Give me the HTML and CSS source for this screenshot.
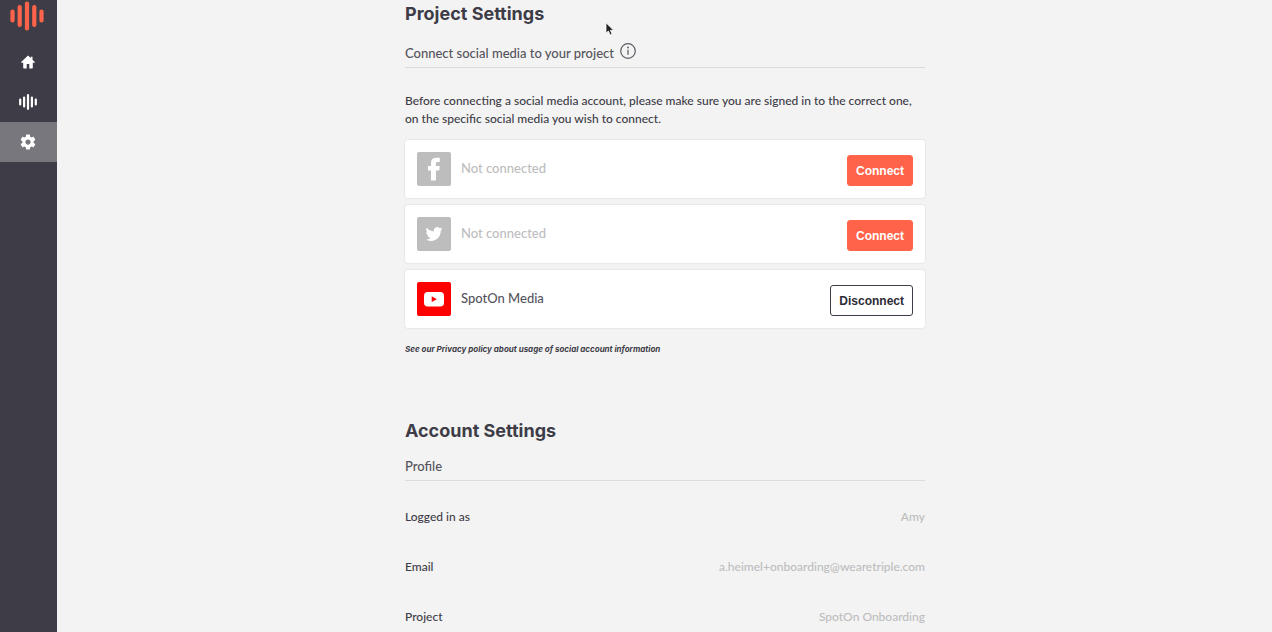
FILE: index.html
```
<!DOCTYPE html>
<html lang="en">
<head>
    <meta charset="utf-8">
    <title>Settings</title>
    <link rel="stylesheet" href="styles.css">
</head>
<body>
<nav class="sidebar">
    <a href="#" class="logo" aria-label="SpotOn">
        <svg width="34" height="30" viewBox="0 0 34 30" stroke="#ff644b" stroke-width="4.2" stroke-linecap="round">
            <path d="M2.5 10.500v9M9.700 6v18M17 2.500v25M24.300 6v18M31.500 10.500v9"/>
        </svg>
    </a>
    <a href="#" class="nav-item" aria-label="Home">
        <svg width="14" height="14" viewBox="0 0 14 14" fill="#fff">
            <path d="M7 .4L.2 7v.7h2v5.1q0 .6.6.6h2.900V9h2.600v4.400h2.900q.6 0 .6-.6V7.700h2V7l-2.300-2.200V1.700H9.800v1.200z"/>
        </svg>
    </a>
    <a href="#" class="nav-item" aria-label="Streams">
        <svg width="18" height="16" viewBox="0 0 18 16" stroke="#fff" stroke-width="2.200" stroke-linecap="round">
            <path d="M1.200 5.500v5M5.100 3.500v9M9 1.200v13.600M12.900 3.500v9M16.800 5.500v5"/>
        </svg>
    </a>
    <a href="#" class="nav-item active" aria-label="Settings">
        <svg width="18" height="18" viewBox="0 0 24 24" fill="#fff">
            <path d="M19.430 12.980c.04-.32.07-.64.07-.98s-.03-.66-.07-.98l2.110-1.650c.19-.15.24-.42.12-.64l-2-3.460c-.12-.22-.39-.3-.61-.22l-2.490 1c-.52-.4-1.080-.73-1.690-.98l-.38-2.650C14.460 2.180 14.250 2 14 2h-4c-.25 0-.46.18-.49.42l-.38 2.650c-.61.25-1.170.59-1.690.98l-2.490-1c-.23-.09-.49 0-.61.22l-2 3.460c-.13.22-.07.49.12.64l2.110 1.650c-.04.32-.07.65-.07.98s.03.66.07.98l-2.110 1.650c-.19.15-.24.42-.12.64l2 3.460c.12.22.39.3.61.22l2.490-1c.52.4 1.080.73 1.690.98l.38 2.650c.03.24.24.42.49.42h4c.25 0 .46-.18.49-.42l.38-2.650c.61-.25 1.170-.59 1.690-.98l2.490 1c.23.09.49 0 .61-.22l2-3.460c.12-.22.07-.49-.12-.64l-2.110-1.650zM12 15.500c-1.930 0-3.500-1.570-3.500-3.500s1.570-3.500 3.500-3.500 3.500 1.570 3.500 3.500-1.570 3.500-3.500 3.500z"/>
        </svg>
    </a>
</nav>
<main class="content">
    <section class="settings">
        <h2>Project Settings</h2>
        <h3>Connect social media to your project
            <svg class="info" width="16" height="16" viewBox="0 0 16 16" fill="none" stroke="#5c5c64">
                <circle cx="8" cy="8" r="7.300" stroke-width="1.200"/>
                <path d="M8 6.700v5" stroke-width="1.300"/>
                <circle cx="8" cy="4.500" r=".9" fill="#5c5c64" stroke="none"/>
            </svg>
        </h3>
        <p class="intro">Before connecting a social media account, please make sure you are signed in to the correct one, on the specific social media you wish to connect.</p>
        <ul class="accounts">
            <li class="account">
                <svg class="icon" viewBox="0 0 34 34">
                    <rect width="34" height="34" rx="2" fill="#bdbdbe"/>
                    <path d="M14 28.500V18.500h-3V14h3v-3c0-3.600 1.800-5.300 5.300-5.300h3.500V10h-2.200c-1.300 0-1.700.5-1.700 1.600V14h3.800l-.5 4.500h-3.300v10z" fill="#fff"/>
                </svg>
                <span class="name">Not connected</span>
                <button type="button" class="btn">Connect</button>
            </li>
            <li class="account">
                <svg class="icon" viewBox="0 0 34 34">
                    <rect width="34" height="34" rx="2" fill="#bdbdbe"/>
                    <path transform="translate(8.500 8.500) scale(.71)" fill="#fff" d="M23.950 4.570a10 10 0 0 1-2.820.77 4.960 4.960 0 0 0 2.160-2.720c-.95.55-2 .95-3.130 1.180a4.920 4.920 0 0 0-8.380 4.480C7.690 8.100 4.070 6.130 1.640 3.160a4.820 4.820 0 0 0-.67 2.480c0 1.710.87 3.210 2.190 4.100a4.900 4.900 0 0 1-2.230-.62v.06a4.920 4.920 0 0 0 3.950 4.830 5 5 0 0 1-2.210.08 4.940 4.940 0 0 0 4.600 3.420A9.870 9.870 0 0 1 0 19.540a13.990 13.990 0 0 0 7.550 2.210c9.050 0 14-7.500 14-13.980 0-.21 0-.42-.02-.63a9.940 9.940 0 0 0 2.420-2.570z"/>
                </svg>
                <span class="name">Not connected</span>
                <button type="button" class="btn">Connect</button>
            </li>
            <li class="account">
                <svg class="icon" viewBox="0 0 34 34">
                    <rect width="34" height="34" rx="2" fill="#fe0000"/>
                    <rect x="7" y="10" width="20" height="14.500" rx="3.800" fill="#fff"/>
                    <path d="M14.700 14.300v5.800l5.200-2.900z" fill="#fe0000"/>
                </svg>
                <span class="name linked">SpotOn Media</span>
                <button type="button" class="btn outline">Disconnect</button>
            </li>
        </ul>
        <a href="#" class="privacy">See our Privacy policy about usage of social account information</a>
    </section>
    <section class="settings">
        <h2>Account Settings</h2>
        <h3>Profile</h3>
        <dl class="profile">
            <div class="row"><dt>Logged in as</dt><dd>Amy</dd></div>
            <div class="row"><dt>Email</dt><dd>a.heimel+onboarding@wearetriple.com</dd></div>
            <div class="row"><dt>Project</dt><dd>SpotOn Onboarding</dd></div>
        </dl>
    </section>
</main>
<svg class="cursor" width="10" height="15" viewBox="0 0 10 15">
    <path d="M1 .8v10.400l2.400-2.200 1.700 4 2-.8-1.700-3.900h3.300z" fill="#222226" stroke="#fff" stroke-width=".8"/>
</svg>
</body>
</html>
```
FILE: styles.css
```
* {
    box-sizing: border-box;
}
body {
    margin: 0;
    display: flex;
    height: 100vh;
    overflow: hidden;
    background: #f3f3f3;
    color: #3d3c47;
    font-family: Lato, sans-serif;
    font-weight: 500;
}
h2, h3, p, ul, dl, dd {
    margin: 0;
    padding: 0;
}

/* sidebar */
.sidebar {
    flex: 0 0 57px;
    background: #3e3d47;
}
.logo {
    display: flex;
    justify-content: center;
    padding: 1px 3px 11px 0;
}
.nav-item {
    display: flex;
    align-items: center;
    justify-content: center;
    height: 40px;
    padding-right: 1px;
}
.nav-item.active {
    background: #77777d;
}

/* content */
.content {
    flex: 1;
    padding-left: 1px;
}
.settings {
    max-width: 520px;
    margin: 0 auto 61px;
}
h2 {
    padding-top: 2px;
    font-family: Inter, sans-serif;
    font-size: 18px;
    line-height: 24px;
    font-weight: 700;
}
h3 {
    margin-top: 11px;
    padding-bottom: 2px;
    border-bottom: 1px solid #dcdcdc;
    color: #55545c;
    font-size: 13px;
    line-height: 24px;
    font-weight: 500;
}
.info {
    margin: 6px 0 0 3px;
    vertical-align: -1px;
}
.intro {
    margin: 24px 0 12px;
    font-size: 12px;
    line-height: 18px;
}
.accounts {
    display: grid;
    gap: 7px;
    list-style: none;
}
.account {
    display: flex;
    align-items: center;
    height: 58px;
    padding: 0 12px;
    border-radius: 3px;
    background: #fff;
    box-shadow: 0 0 2px rgba(0, 0, 0, 0.15);
}
.icon {
    width: 34px;
    height: 34px;
}
.name {
    flex: 1;
    margin: 0 0 2px 10px;
    color: #bdbdbe;
    font-size: 13px;
}
.name.linked {
    color: #55545c;
}
.btn {
    height: 31px;
    margin-top: 3px;
    padding: 0 8px;
    border: 1px solid #ff644b;
    border-radius: 3px;
    background: #ff644b;
    color: #fff;
    font-family: "Liberation Sans", Arial, sans-serif;
    font-size: 12px;
    font-weight: 700;
    cursor: pointer;
}
.btn.outline {
    border-color: #3e3d47;
    background: #fff;
    color: #2c2b35;
}
.privacy {
    display: block;
    margin-top: 14px;
    color: #3d3c47;
    font-family: Inter, sans-serif;
    font-size: 8px;
    line-height: 14px;
    font-weight: 700;
    font-style: italic;
    text-decoration: none;
}
.profile {
    padding-top: 10px;
}
.row {
    display: flex;
    justify-content: space-between;
    align-items: center;
    height: 50px;
    font-size: 12px;
}
.row dd {
    color: #bdbdbe;
}
.cursor {
    position: absolute;
    left: 605px;
    top: 22px;
}
```
